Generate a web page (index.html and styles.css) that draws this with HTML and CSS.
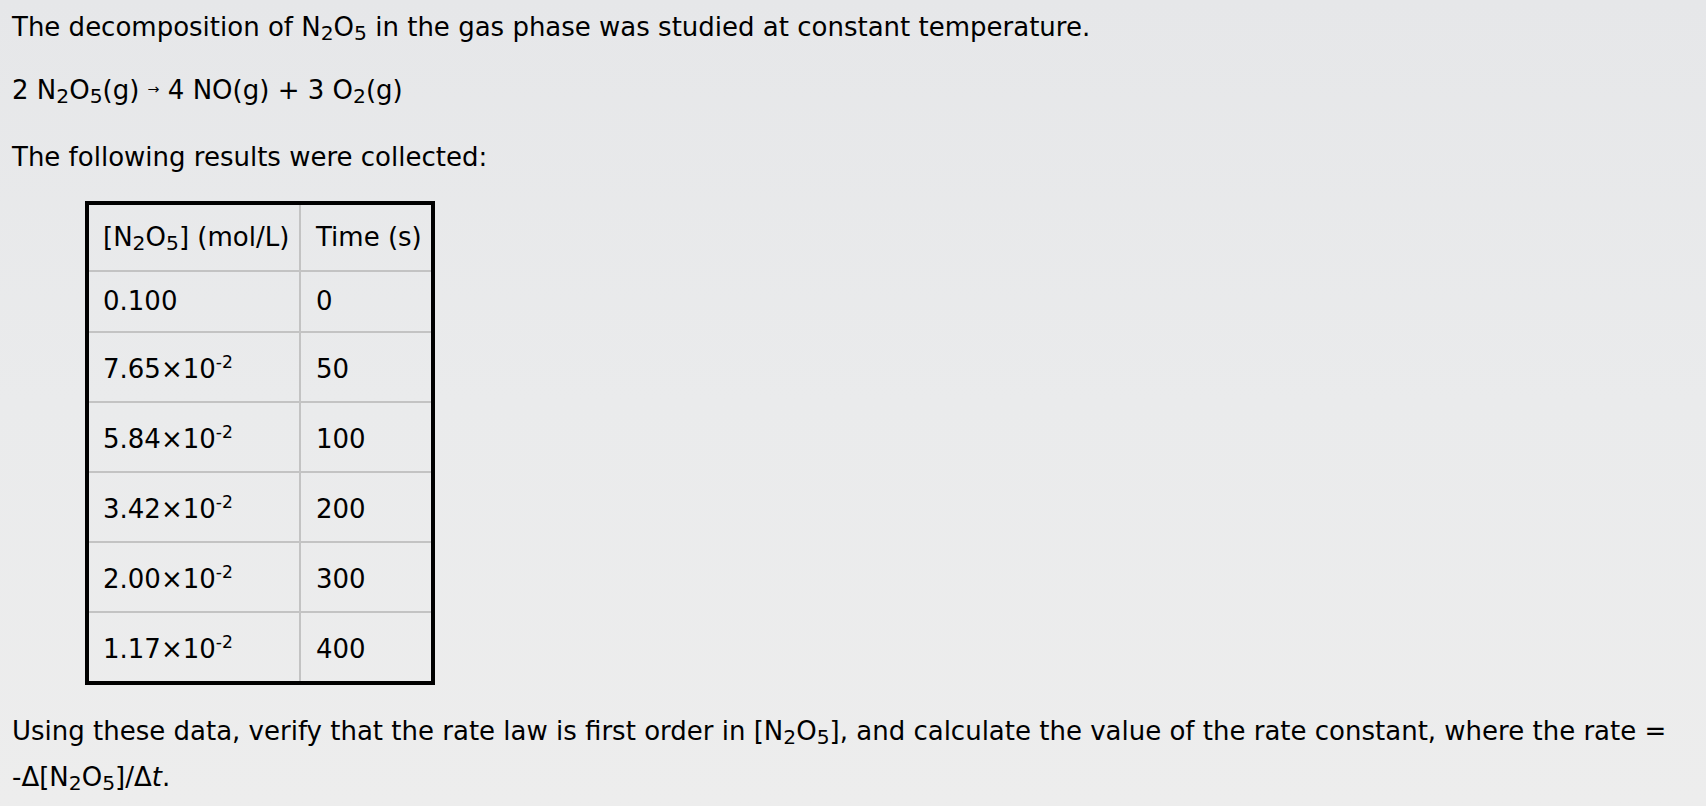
FILE: index.html
```html
<!DOCTYPE html>
<html>
<head>
<meta charset="utf-8">
<link rel="stylesheet" href="styles.css">
</head>
<body>
<div class="page">
  <p class="intro">The decomposition of N<sub>2</sub>O<sub>5</sub> in the gas phase was studied at constant temperature.</p>
  <p class="reaction">2 N<sub>2</sub>O<sub>5</sub>(g) <span class="arrow">→</span> 4 NO(g) + 3 O<sub>2</sub>(g)</p>
  <p class="lead">The following results were collected:</p>
  <table class="data">
    <tr class="head"><td class="c1">[N<sub>2</sub>O<sub>5</sub>] (mol/L)</td><td class="c2">Time (s)</td></tr>
    <tr class="plain"><td class="c1">0.100</td><td class="c2">0</td></tr>
    <tr class="exp"><td class="c1">7.65×10<sup>-2</sup></td><td class="c2">50</td></tr>
    <tr class="exp"><td class="c1">5.84×10<sup>-2</sup></td><td class="c2">100</td></tr>
    <tr class="exp"><td class="c1">3.42×10<sup>-2</sup></td><td class="c2">200</td></tr>
    <tr class="exp"><td class="c1">2.00×10<sup>-2</sup></td><td class="c2">300</td></tr>
    <tr class="exp last"><td class="c1">1.17×10<sup>-2</sup></td><td class="c2">400</td></tr>
  </table>
  <p class="question">Using these data, verify that the rate law is first order in [N<sub>2</sub>O<sub>5</sub>], and calculate the value of the rate constant, where the rate = <span class="formula">-Δ[N<sub>2</sub>O<sub>5</sub>]/Δ<i>t</i>.</span></p>
</div>
</body>
</html>
```
FILE: styles.css
```css
html, body {
  margin: 0;
  padding: 0;
}
body {
  background: linear-gradient(to bottom, #e6e7e9 0%, #eaebec 50%, #ededed 100%);
  min-height: 806px;
  color: #000;
  font-family: "DejaVu Sans", Verdana, sans-serif;
  font-size: 26px;
}
.page {
  padding: 9px 12px 0 12px;
  display: flex;
  flex-direction: column;
  align-items: flex-start;
}
p {
  margin: 0;
  line-height: 36px;
}
.reaction { margin-top: 26px; }
.lead { margin-top: 31px; }
sub {
  font-size: 0.78em;
  line-height: 0;
  vertical-align: -4px;
}
sup {
  font-size: 0.66em;
  line-height: 0;
  vertical-align: 10px;
}
.arrow {
  font-size: 0.55em;
  vertical-align: 0.35em;
}
.data {
  width: 350px;
  margin: 26px 0 0 73px;
  border: 4px solid #000;
  border-collapse: separate;
  border-spacing: 0;
  table-layout: fixed;
}
.data td {
  padding: 14px 14px 14px 14px;
  line-height: 31px;
  border-bottom: 2px solid #c3c3c3;
  text-align: left;
  white-space: nowrap;
  overflow: visible;
}
.data tr.last td { border-bottom: none; }
.data td.c1 {
  width: 182px;
  padding-right: 14px;
  border-right: 2px solid #c3c3c3;
}
.data td.c2 {
  padding-left: 15px;
  padding-right: 0;
}
.data tr.head td { padding-top: 17px; padding-bottom: 17px; }
.data tr.exp td { padding-top: 21px; padding-bottom: 16px; }
.data tr.last td { padding-bottom: 16px; }
.question {
  margin-top: 23px;
  line-height: 46px;
}
.formula {
  white-space: nowrap;
}
```
